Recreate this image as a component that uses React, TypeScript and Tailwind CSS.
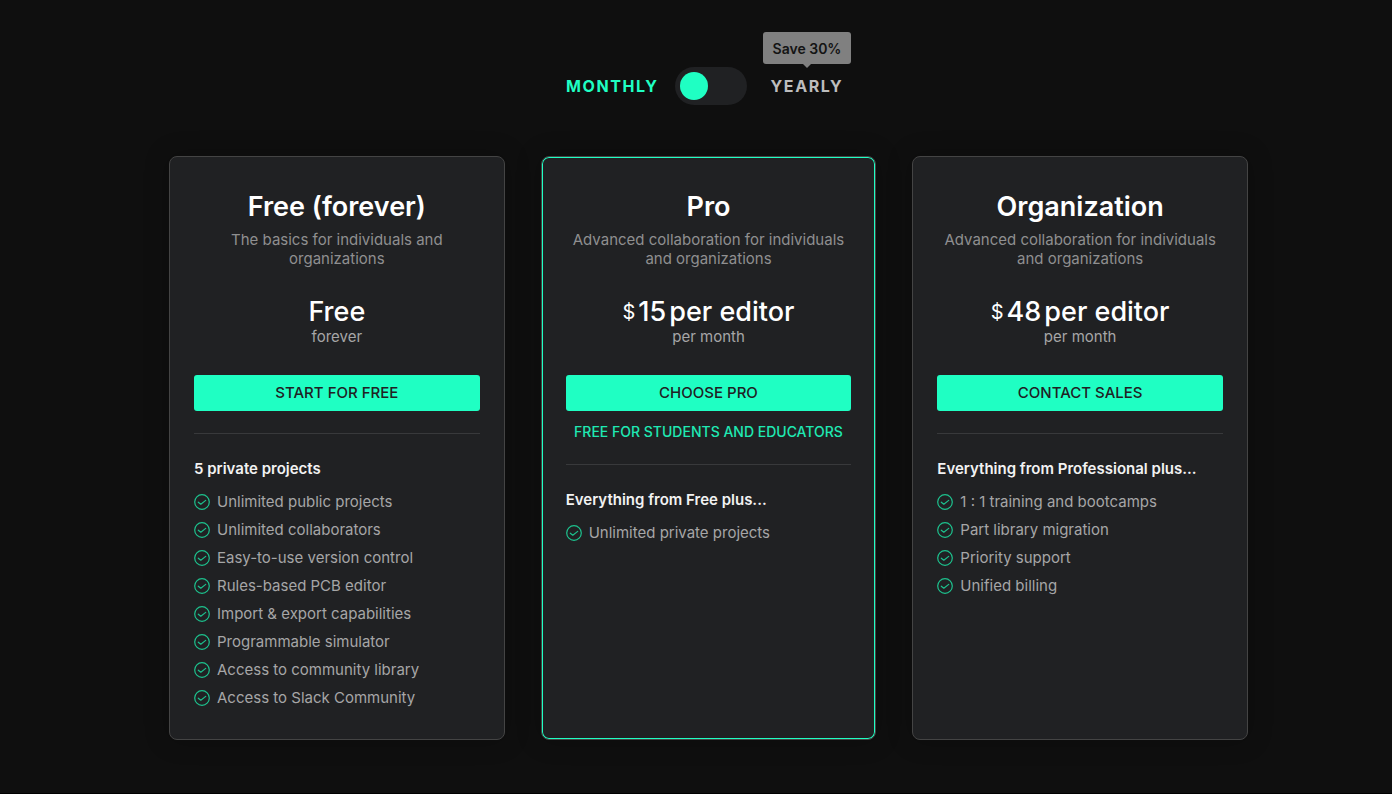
import { useState } from 'react'

type Plan = {
  name: string
  summary: string
  price?: number
  priceLabel: string
  period: string
  cta: string
  link?: string
  featuresTitle: string
  features: string[]
  highlighted?: boolean
}

const plans: Plan[] = [
  {
    name: 'Free (forever)',
    summary: 'The basics for individuals and organizations',
    priceLabel: 'Free',
    period: 'forever',
    cta: 'START FOR FREE',
    featuresTitle: '5 private projects',
    features: [
      'Unlimited public projects',
      'Unlimited collaborators',
      'Easy-to-use version control',
      'Rules-based PCB editor',
      'Import & export capabilities',
      'Programmable simulator',
      'Access to community library',
      'Access to Slack Community',
    ],
  },
  {
    name: 'Pro',
    summary: 'Advanced collaboration for individuals and organizations',
    price: 15,
    priceLabel: 'per editor',
    period: 'per month',
    cta: 'CHOOSE PRO',
    link: 'FREE FOR STUDENTS AND EDUCATORS',
    featuresTitle: 'Everything from Free plus...',
    features: ['Unlimited private projects'],
    highlighted: true,
  },
  {
    name: 'Organization',
    summary: 'Advanced collaboration for individuals and organizations',
    price: 48,
    priceLabel: 'per editor',
    period: 'per month',
    cta: 'CONTACT SALES',
    featuresTitle: 'Everything from Professional plus...',
    features: [
      '1 : 1 training and bootcamps',
      'Part library migration',
      'Priority support',
      'Unified billing',
    ],
  },
]

function CheckIcon() {
  return (
    <svg className="h-4 w-4 shrink-0 text-[#1dc28e]" viewBox="0 0 16 16" fill="none" stroke="currentColor" strokeWidth="1.2" aria-hidden="true">
      <circle cx="8" cy="8" r="7.3" />
      <path d="M4.3 8.2l2.5 2 4.9-3.8" strokeLinecap="round" strokeLinejoin="round" />
    </svg>
  )
}

function PlanCard({ plan }: { plan: Plan }) {
  return (
    <article
      className={
        plan.highlighted
          ? 'flex flex-col rounded-lg border border-[#444444] bg-[#202123] px-6 pt-8 pb-[27px] shadow-[inset_0_0_0_1px_#1fffc3,0_0_24px_rgba(0,0,0,0.25)]'
          : 'flex flex-col rounded-lg border border-[#444444] bg-[#202123] px-6 pt-8 pb-[27px] shadow-[0_0_24px_rgba(0,0,0,0.25)]'
      }
    >
      <div className="text-center">
        <h2 className="text-[27px] leading-9 font-semibold text-white">{plan.name}</h2>
        <p className="mt-[5px] text-[15px] leading-[19px] text-[#8f8f90]">{plan.summary}</p>
        <p className="mt-[29px] flex justify-center gap-[3px] text-[27px] leading-[30px] font-medium text-white">
          {plan.price && (
            <>
              <span className="text-[20px] font-normal">$</span>
              <span>{plan.price}</span>
            </>
          )}
          <span>{plan.priceLabel}</span>
        </p>
        <p className="text-[15px] leading-5 text-[#a6a6a7]">{plan.period}</p>
      </div>
      <button type="button" className="mt-7 h-9 w-full shrink-0 rounded-[3px] bg-[#1fffc3] text-[15px] leading-5 font-medium text-[#202123]">
        {plan.cta}
      </button>
      {plan.link && (
        <a href="#students" className="mt-[11px] text-center text-[14px] leading-5 font-medium text-[#1fe9b3]">
          {plan.link}
        </a>
      )}
      <hr className="mt-[22px] border-[#38393b]" />
      <h3 className="mt-[23px] text-[15px] leading-6 font-semibold text-[#f2f2f2]">{plan.featuresTitle}</h3>
      <ul className="mt-[7px]">
        {plan.features.map((feature) => (
          <li key={feature} className="flex h-7 items-center gap-[7px] text-[15px] leading-5 text-[#a6a6a7]">
            <CheckIcon />
            {feature}
          </li>
        ))}
      </ul>
    </article>
  )
}

export default function App() {
  const [yearly, setYearly] = useState(false)

  return (
    <div className="min-h-screen bg-black font-['Inter',sans-serif]">
      <main className="bg-[#0f0f0f] pt-[67px] pb-[53px] pl-[25px]">
        <div className="flex items-center justify-center gap-4 text-base font-bold tracking-widest">
          <span className={yearly ? 'w-[93px] text-[#bdbdbd]' : 'w-[93px] text-[#1fffc3]'}>MONTHLY</span>
          <label className="flex h-[38px] w-[72px] cursor-pointer items-center rounded-full bg-[#202123] p-[5px]">
            <input
              type="checkbox"
              className="peer sr-only"
              aria-label="Bill yearly"
              checked={yearly}
              onChange={(e) => setYearly(e.target.checked)}
            />
            <span className="h-7 w-7 rounded-full bg-[#1fffc3] transition-transform peer-checked:translate-x-[34px]" />
          </label>
          <span className={yearly ? 'relative w-[88px] text-center text-[#1fffc3]' : 'relative w-[88px] text-center text-[#bdbdbd]'}>
            YEARLY
            <span className="absolute bottom-full left-0 mb-2.5 flex h-8 w-full items-center justify-center rounded-[3px] bg-[#808080] text-[14px] font-semibold tracking-normal text-[#141414]">
              Save 30%
              <span className="absolute top-full left-1/2 -translate-x-1/2 border-x-4 border-t-4 border-x-transparent border-t-[#808080]" />
            </span>
          </span>
        </div>

        <div className="mx-auto mt-[51px] grid max-w-[1079px] grid-cols-3 gap-9">
          {plans.map((plan) => (
            <PlanCard key={plan.name} plan={plan} />
          ))}
        </div>
      </main>
    </div>
  )
}
